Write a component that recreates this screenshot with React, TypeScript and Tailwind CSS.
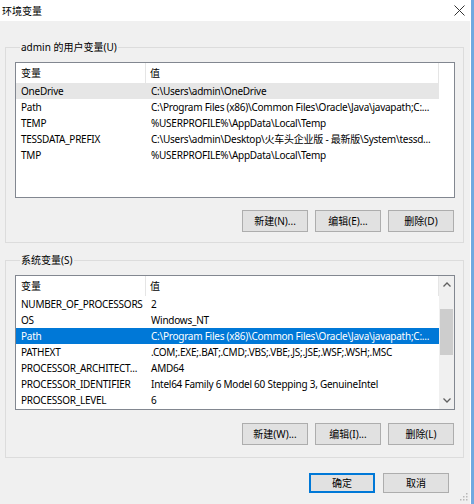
import React from "react";

type Row = { name: string; value: string; sel?: "gray" | "blue" };

const userRows: Row[] = [
  { name: "OneDrive", value: "C:\\Users\\admin\\OneDrive", sel: "gray" },
  { name: "Path", value: "C:\\Program Files (x86)\\Common Files\\Oracle\\Java\\javapath;C:..." },
  { name: "TEMP", value: "%USERPROFILE%\\AppData\\Local\\Temp" },
  { name: "TESSDATA_PREFIX", value: "C:\\Users\\admin\\Desktop\\火车头企业版 - 最新版\\System\\tessd..." },
  { name: "TMP", value: "%USERPROFILE%\\AppData\\Local\\Temp" },
];

const sysRows: Row[] = [
  { name: "NUMBER_OF_PROCESSORS", value: "2" },
  { name: "OS", value: "Windows_NT" },
  { name: "Path", value: "C:\\Program Files (x86)\\Common Files\\Oracle\\Java\\javapath;C:...", sel: "blue" },
  { name: "PATHEXT", value: ".COM;.EXE;.BAT;.CMD;.VBS;.VBE;.JS;.JSE;.WSF;.WSH;.MSC" },
  { name: "PROCESSOR_ARCHITECT...", value: "AMD64" },
  { name: "PROCESSOR_IDENTIFIER", value: "Intel64 Family 6 Model 60 Stepping 3, GenuineIntel" },
  { name: "PROCESSOR_LEVEL", value: "6" },
];

function Header() {
  return (
    <div className="flex h-[20px] w-[423px] shrink-0">
      <div className="flex w-[130px] items-center border-r border-[#e5e5e5] pl-[5px]">变量</div>
      <div className="flex w-[293px] items-center border-r border-[#e5e5e5] pl-[4px]">值</div>
    </div>
  );
}

function ListRow({ r }: { r: Row }) {
  const bg =
    r.sel === "blue" ? "bg-[#0078d7] text-white" : r.sel === "gray" ? "bg-[#e6e6e6]" : "";
  return (
    <div className={`flex h-[16px] w-[423px] shrink-0 items-center tracking-[-0.25px] ${bg}`}>
      <div className="w-[130px] overflow-hidden whitespace-nowrap pl-[5px]">{r.name}</div>
      <div className="w-[293px] overflow-hidden whitespace-nowrap pl-[5px]">{r.value}</div>
    </div>
  );
}

function ScrollBar() {
  return (
    <div className="flex w-[15px] shrink-0 flex-col bg-[#f0f0f0]">
      <div className="flex h-[17px] items-center justify-center">
        <svg width="8" height="5" viewBox="0 0 8 5">
          <polyline points="0.5,4.5 4,1 7.5,4.5" fill="none" stroke="#606060" strokeWidth="1.3" />
        </svg>
      </div>
      <div className="flex flex-1 flex-col px-[1px] pt-[16px]">
        <div className="h-[46px] bg-[#cdcdcd]" />
      </div>
      <div className="flex h-[17px] items-center justify-center">
        <svg width="8" height="5" viewBox="0 0 8 5">
          <polyline points="0.5,0.5 4,4 7.5,0.5" fill="none" stroke="#606060" strokeWidth="1.3" />
        </svg>
      </div>
    </div>
  );
}

function ListView({ rows, h, scroll }: { rows: Row[]; h: string; scroll?: boolean }) {
  return (
    <div className={`flex w-[440px] border border-[#828790] bg-white ${h}`}>
      <div className="flex w-[423px] flex-col overflow-hidden">
        <Header />
        {rows.map((r, i) => (
          <ListRow key={i} r={r} />
        ))}
      </div>
      {scroll ? <ScrollBar /> : null}
    </div>
  );
}

function Btn({ children, primary }: { children: React.ReactNode; primary?: boolean }) {
  return (
    <div
      className={`flex h-full w-[66px] items-center justify-center bg-[#e1e1e1] ${
        primary ? "border-2 border-[#0078d7]" : "border border-[#adadad]"
      }`}
    >
      {children}
    </div>
  );
}

function Group({
  label,
  rows,
  listH,
  scroll,
  buttons,
  btnMt,
  pb,
}: {
  label: string;
  rows: Row[];
  listH: string;
  scroll?: boolean;
  buttons: string[];
  btnMt: string;
  pb: string;
}) {
  return (
    <fieldset className={`ml-[5px] w-[459px] border border-[#dcdcdc] pl-[9px] ${pb}`}>
      <legend className="ml-[5px] px-[1px] leading-[16px]">{label}</legend>
      <div className="mt-[7px]">
        <ListView rows={rows} h={listH} scroll={scroll} />
      </div>
      <div className={`flex h-[22px] w-[439px] justify-end gap-[7px] ${btnMt}`}>
        {buttons.map((b) => (
          <Btn key={b}>{b}</Btn>
        ))}
      </div>
    </fieldset>
  );
}

export default function App() {
  return (
    <div className="flex h-[504px] w-[474px] overflow-hidden bg-[#f0f0f0] font-['Noto_Sans','Noto_Sans_CJK_SC',sans-serif] text-[10px] text-black">
      <div className="flex w-[470px] flex-col">
        <div className="flex h-[21px] shrink-0 items-center justify-between bg-white pl-[2px] pr-[4px]">
          <span className="leading-[16px]">环境变量</span>
          <svg width="11" height="11" viewBox="0 0 11 11" className="mr-[1px]">
            <path d="M0.5 0.5 L10.5 10.5 M10.5 0.5 L0.5 10.5" stroke="#333" strokeWidth="1" />
          </svg>
        </div>
        <div className="mt-[18px]">
          <Group
            label="admin 的用户变量(U)"
            rows={userRows}
            listH="h-[136px]"
            buttons={["新建(N)...", "编辑(E)...", "删除(D)"]}
            btnMt="mt-[12px]"
            pb="pb-[10px]"
          />
        </div>
        <div className="mt-[9px]">
          <Group
            label="系统变量(S)"
            rows={sysRows}
            listH="h-[135px]"
            scroll
            buttons={["新建(W)...", "编辑(I)...", "删除(L)"]}
            btnMt="mt-[13px]"
            pb="pb-[12px]"
          />
        </div>
        <div className="mt-[15px] flex h-[21px] justify-end gap-[8px] pr-[21px]">
          <Btn primary>确定</Btn>
          <Btn>取消</Btn>
        </div>
        <div className="flex flex-1 items-end justify-end pb-[3px] pr-[2px]">
          <svg width="8" height="8" viewBox="0 0 8 8">
            <rect x="6" y="0" width="1.5" height="1.5" fill="#b8b8b8" />
            <rect x="3" y="3" width="1.5" height="1.5" fill="#b8b8b8" />
            <rect x="6" y="3" width="1.5" height="1.5" fill="#b8b8b8" />
            <rect x="0" y="6" width="1.5" height="1.5" fill="#b8b8b8" />
            <rect x="3" y="6" width="1.5" height="1.5" fill="#b8b8b8" />
            <rect x="6" y="6" width="1.5" height="1.5" fill="#b8b8b8" />
          </svg>
        </div>
      </div>
      <div className="flex w-[4px] shrink-0">
        <div className="w-[1px] bg-white" />
        <div className="flex-1 bg-[#70a9e0]" />
      </div>
    </div>
  );
}
